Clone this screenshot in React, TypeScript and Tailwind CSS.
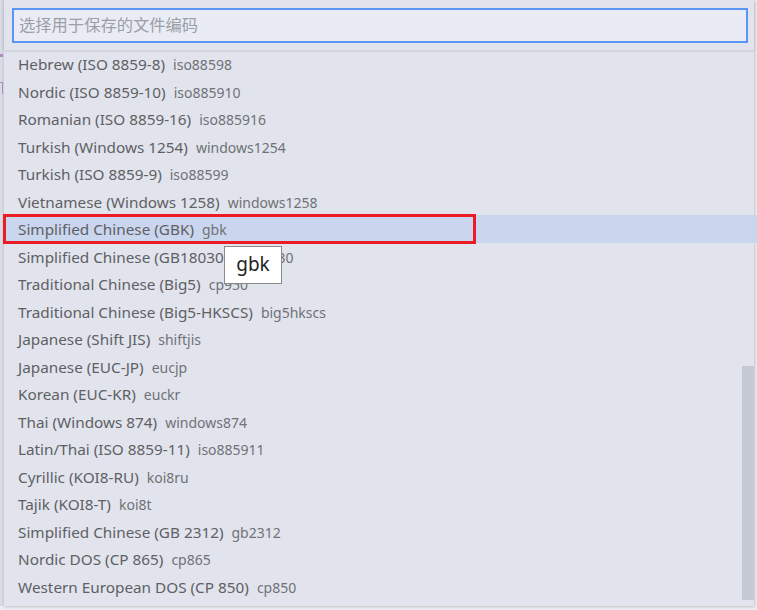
import React from "react";

const rows: [string, string][] = [
  ["Hebrew (ISO 8859-8)", "iso88598"],
  ["Nordic (ISO 8859-10)", "iso885910"],
  ["Romanian (ISO 8859-16)", "iso885916"],
  ["Turkish (Windows 1254)", "windows1254"],
  ["Turkish (ISO 8859-9)", "iso88599"],
  ["Vietnamese (Windows 1258)", "windows1258"],
  ["Simplified Chinese (GBK)", "gbk"],
  ["Simplified Chinese (GB18030)", "gb18030"],
  ["Traditional Chinese (Big5)", "cp950"],
  ["Traditional Chinese (Big5-HKSCS)", "big5hkscs"],
  ["Japanese (Shift JIS)", "shiftjis"],
  ["Japanese (EUC-JP)", "eucjp"],
  ["Korean (EUC-KR)", "euckr"],
  ["Thai (Windows 874)", "windows874"],
  ["Latin/Thai (ISO 8859-11)", "iso885911"],
  ["Cyrillic (KOI8-RU)", "koi8ru"],
  ["Tajik (KOI8-T)", "koi8t"],
  ["Simplified Chinese (GB 2312)", "gb2312"],
  ["Nordic DOS (CP 865)", "cp865"],
  ["Western European DOS (CP 850)", "cp850"],
];

export default function App() {
  return (
    <div
      className="relative w-[757px] h-[610px] overflow-hidden bg-[#eceef3] flex"
      style={{ fontFamily: '"Noto Sans", "Noto Sans CJK SC", sans-serif' }}
    >
      <div className="w-[3px] h-[606px] bg-[#d9dce4] relative">
        <div className="absolute left-0 top-[54px] w-[3px] h-[3px] bg-[#b58bc4]" />
        <div className="absolute left-0 top-[82px] w-[3px] h-[12px] border-t border-r border-[#b58bc4]" />
      </div>
      <div className="relative w-[751px] h-[606px] bg-[#e1e4ed] border-l border-[#cdd0d8] shadow-[1px_1px_3px_rgba(0,0,0,0.18)] flex flex-col">
        <div className="h-[50px] shrink-0 pt-[8px] pl-[8px] pr-[6px] shadow-[0_1px_3px_rgba(0,0,0,0.12)] relative z-10 bg-[#e1e4ed]">
          <div className="h-[35px] border-2 border-[#5a96f5] bg-[#e9ecf5] flex items-center pl-[5px]">
            <span className="text-[16.3px] text-[#9b9ea6]">选择用于保存的文件编码</span>
          </div>
        </div>
        <div className="flex flex-col">
          {rows.map(([label, desc], i) => (
            <div
              key={label}
              className={`h-[27.5px] flex items-center pl-[14px] pt-[2px] gap-[8px] whitespace-nowrap ${
                i === 6 ? "bg-[#cad6ee] mr-[-3px]" : ""
              }`}
            >
              <span className="text-[15.3px] text-[#5f6063]">{label}</span>
              <span className="text-[14px] text-[#707276]">{desc}</span>
            </div>
          ))}
        </div>
        <div className="absolute left-[738px] top-[366px] w-[12px] h-[234px] bg-[#c5c9d3]" />
      </div>
      <div className="absolute left-[3px] top-[214px] w-[473px] h-[30px] border-[3px] border-[#ec1c24]" />
      <div className="absolute left-[224px] top-[246px] w-[58px] h-[38px] bg-white border border-[#8a8a8a] flex items-center justify-center">
        <span className="text-[19px] text-[#222] leading-none pb-[2px]" style={{ fontFamily: '"Noto Sans", sans-serif' }}>gbk</span>
      </div>
    </div>
  );
}
